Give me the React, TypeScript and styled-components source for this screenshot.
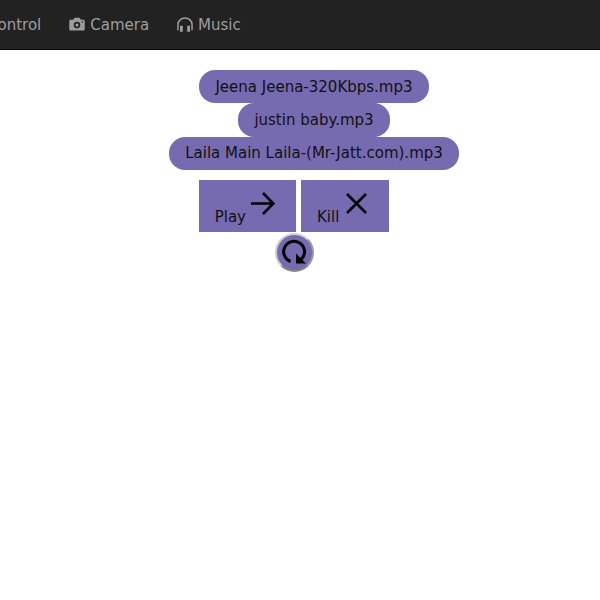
import React from "react";
import styled, { createGlobalStyle } from "styled-components";

const GlobalStyle = createGlobalStyle`
  * { box-sizing: border-box; }
  body {
    margin: 0;
    background: #fff;
    color: #111;
    font-family: "DejaVu Sans", Verdana, sans-serif;
    font-size: 15px;
    overflow-x: hidden;
  }
`;

const NavBar = styled.nav`
  display: flex;
  height: 50px;
  background: #222;
  border-bottom: 1px solid #080808;
  overflow: hidden;
`;

const NavList = styled.ul`
  display: flex;
  margin: 0 0 0 -27px;
  padding: 0;
  list-style: none;
`;

const NavLink = styled.a`
  display: flex;
  align-items: center;
  gap: 5px;
  height: 50px;
  padding: 0 14px;
  color: #9d9d9d;
  line-height: 20px;
  text-decoration: none;
`;

const Page = styled.main`
  display: flex;
  flex-direction: column;
  align-items: center;
  padding: 20px 12px 20px 0;
`;

const SongList = styled.ul`
  display: grid;
  grid-auto-rows: 1fr;
  justify-items: center;
  min-height: 100px;
  margin: 0 0 10px;
  padding: 0 0 0 40px;
  list-style: none;
`;

const SongItem = styled.li`
  display: flex;
`;

const SongButton = styled.button`
  padding: 0 16px;
  border: 0;
  border-radius: 16px;
  background: #766bb0;
  color: #111;
  font: inherit;
  cursor: pointer;
`;

const Actions = styled.div`
  display: flex;
  gap: 5px;
`;

const ActionButton = styled.button`
  display: flex;
  align-items: flex-end;
  gap: 4px;
  height: 52px;
  padding: 8px 16px 6px;
  border: 0;
  background: #766bb0;
  color: #111;
  font: inherit;
  line-height: 18px;
  cursor: pointer;
`;

const ActionIcon = styled.svg`
  width: 30px;
  height: 30px;
  align-self: flex-start;
  fill: none;
  stroke: #000;
`;

const ReloadButton = styled.button`
  display: flex;
  align-items: center;
  justify-content: center;
  width: 39px;
  height: 39px;
  margin-top: 1px;
  padding: 0 0 2px;
  border: 2px solid;
  border-color: #d5d5d5 #999 #888 #ccc;
  border-radius: 50%;
  background: #766bb0;
  cursor: pointer;
`;

const songs = ["Jeena Jeena-320Kbps.mp3", "justin baby.mp3", "Laila Main Laila-(Mr-Jatt.com).mp3"];

const CameraIcon = () => (
  <svg width="16" height="16" viewBox="0 0 16 16" fill="currentColor" aria-hidden="true">
    <path
      fillRule="evenodd"
      d="M1.5 2.8H4L5.6 .8H10.4L12 2.8H14.5Q15.7 2.8 15.7 4V12.4Q15.7 13.4 14.5 13.4H1.5Q.3 13.4 .3 12.4V4Q.3 2.8 1.5 2.8ZM8 4.8A3.3 3.3 0 1 0 8 11.4A3.3 3.3 0 1 0 8 4.8ZM8 6.5A1.6 1.6 0 1 1 8 9.7A1.6 1.6 0 1 1 8 6.5ZM12.7 4.3V5.5H14V4.3Z"
    />
  </svg>
);

const HeadphonesIcon = () => (
  <svg width="16" height="16" viewBox="0 0 16 16" fill="currentColor" aria-hidden="true">
    <path d="M.2 13V7.6A7.6 7.2 0 0 1 15.8 7.6V13L14.3 13.6V7.6A6.3 5.8 0 0 0 1.7 7.6V13.6Z" />
    <path d="M3 8.8H5.8V14.8H3ZM10.2 8.8H13V14.8H10.2Z" />
  </svg>
);

export default function App() {
  return (
    <>
      <GlobalStyle />
      <NavBar>
        <NavList>
          <li><NavLink href="#control">Control</NavLink></li>
          <li><NavLink href="#camera"><CameraIcon />Camera</NavLink></li>
          <li><NavLink href="#music"><HeadphonesIcon />Music</NavLink></li>
        </NavList>
      </NavBar>
      <Page>
        <SongList>
          {songs.map((song) => (
            <SongItem key={song}><SongButton type="button">{song}</SongButton></SongItem>
          ))}
        </SongList>
        <Actions>
          <ActionButton type="button">
            Play
            <ActionIcon viewBox="0 0 30 30" aria-hidden="true">
              <path d="M1 15.5H23M13 5L23.3 15.5L13 26" strokeWidth="2.6" />
            </ActionIcon>
          </ActionButton>
          <ActionButton type="button">
            Kill
            <ActionIcon viewBox="0 0 30 30" aria-hidden="true">
              <path d="M4 6L23 25M23 6L4 25" strokeWidth="2.6" />
            </ActionIcon>
          </ActionButton>
        </Actions>
        <ReloadButton type="button" aria-label="Reload">
          <svg width="30" height="30" viewBox="0 0 30 30" aria-hidden="true">
            <path d="M11.5 24.5A10.4 10.4 0 1 1 22 22.5" fill="none" stroke="#000" strokeWidth="3" />
            <path d="M17 16.5V26.5H27Z" />
          </svg>
        </ReloadButton>
      </Page>
    </>
  );
}
